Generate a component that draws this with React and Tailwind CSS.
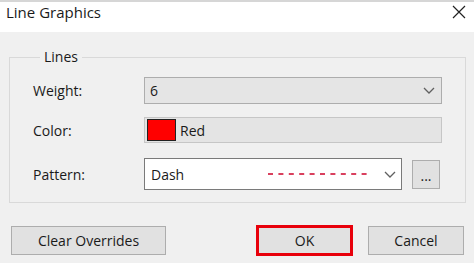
import React from 'react';

const font = { fontFamily: '"Open Sans", "Noto Sans", Arial, sans-serif' };

function Chevron() {
    return (
        <svg width="12" height="7" viewBox="0 0 12 7" className="shrink-0">
            <path d="M1 1 L6 6 L11 1" fill="none" stroke="#606060" strokeWidth="1.3" />
        </svg>
    );
}

function WinButton({ children, className = '' }) {
    return (
        <button
            type="button"
            className={`h-[29px] bg-[#e1e1e1] border border-[#adadad] text-[14px] text-[#1a1a1a] flex items-center justify-center ${className}`}
        >
            {children}
        </button>
    );
}

export default function App() {
    return (
        <div className="w-[474px] h-[263px] bg-[#f0f0f0] flex flex-col overflow-hidden text-[#1a1a1a]" style={font}>
            <div className="h-[2px] bg-[#d6d6d6]" />
            <div className="h-[30px] bg-white flex items-start justify-between pl-[6px] pr-[8px]">
                <span className="text-[15px] leading-[20px]">Line Graphics</span>
                <svg width="14" height="14" viewBox="0 0 14 14" className="mt-[3px]">
                    <path d="M1 1 L13 13 M13 1 L1 13" stroke="#222" strokeWidth="1.2" fill="none" />
                </svg>
            </div>

            <div className="flex-1 flex flex-col px-[9px] pt-[15px]">
                <fieldset className="border border-[#d9d9d9] mr-[-1px] pl-[23px] pr-[23px] pt-[10px] pb-[12px]">
                    <legend className="ml-[7px] px-[4px] text-[14px] leading-[20px]">Lines</legend>
                    <div className="flex flex-col">
                        <div className="flex items-center h-[27px]">
                            <span className="w-[111px] text-[14px]">Weight:</span>
                            <div className="flex-1 h-[27px] bg-[#e5e5e5] border border-[#adadad] flex items-center justify-between pl-[5px] pr-[6px]">
                                <span className="text-[14px]">6</span>
                                <Chevron />
                            </div>
                        </div>
                        <div className="flex items-center h-[26px] mt-[13px]">
                            <span className="w-[111px] text-[14px]">Color:</span>
                            <div className="flex-1 h-[26px] bg-[#e4e4e4] border border-[#c6c6c6] flex items-center gap-[4px] pl-[2px]">
                                <span className="w-[29px] h-[22px] bg-[#ff0000] border border-[#222]" />
                                <span className="text-[14px]">Red</span>
                            </div>
                        </div>
                        <div className="flex items-center h-[32px] mt-[15px]">
                            <span className="w-[111px] text-[14px]">Pattern:</span>
                            <div className="w-[258px] h-[32px] bg-white border border-[#7a7a7a] flex items-center pl-[6px] pr-[5px]">
                                <span className="flex-1 text-[14px]">Dash</span>
                                <svg width="102" height="4" viewBox="0 0 102 4" className="shrink-0">
                                    <line x1="0" y1="2" x2="102" y2="2" stroke="#d9405e" strokeWidth="2" strokeDasharray="5 5.4" />
                                </svg>
                                <span className="w-[14px]" />
                                <Chevron />
                            </div>
                            <WinButton className="w-[28px] ml-[10px] text-[12px] leading-[12px] pt-[4px]">...</WinButton>
                        </div>
                    </div>
                </fieldset>

                <div className="flex items-center mt-[22px] pl-[2px]">
                    <WinButton className="w-[155px]">Clear Overrides</WinButton>
                    <div className="ml-[90px] w-[97px] h-[31px] border-[3px] border-[#e8000b] flex">
                        <button type="button" className="flex-1 bg-[#e1e1e1] text-[14px] text-[#1a1a1a]">OK</button>
                    </div>
                    <WinButton className="w-[96px] ml-[15px]">Cancel</WinButton>
                </div>
            </div>
        </div>
    );
}
